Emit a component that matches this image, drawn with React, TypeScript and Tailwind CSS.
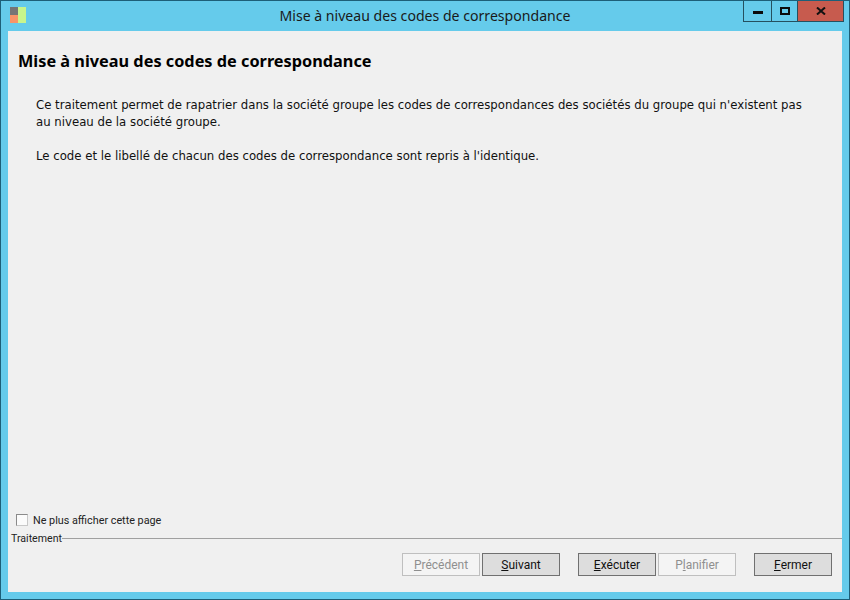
const tahoma = "font-['Tahoma','DejaVu_Sans',sans-serif]"

function WinButton({ label, hotkey, rest, disabled }: { label?: string; hotkey: string; rest: string; disabled?: boolean }) {
  return (
    <button
      className={
        disabled
          ? "w-[78px] h-[23px] border border-[#bfbfbf] bg-[#f4f4f4] text-[#8f8f8f] text-[12px] font-['Roboto',sans-serif] flex items-center justify-center"
          : "w-[78px] h-[23px] border border-[#707070] bg-[#dddddd] text-[#111] text-[12px] font-['Roboto',sans-serif] flex items-center justify-center"
      }
    >
      {label}
      <span className="underline">{hotkey}</span>
      {rest}
    </button>
  )
}

export default function App() {
  return (
    <div className="w-[850px] h-[600px] bg-[#65cbeb] border border-[#1d5f78] flex flex-col font-['Noto_Sans',sans-serif] overflow-hidden">
      <div className="h-[30px] shrink-0 flex items-start">
        <svg className="ml-[9px] mt-[6px]" width="17" height="16" viewBox="0 0 17 16">
          <rect x="0" y="0" width="8" height="8" fill="#757575" />
          <rect x="0" y="8" width="8" height="8" fill="#f79468" />
          <rect x="8" y="0" width="8" height="16" fill="#c8f58c" />
        </svg>
        <div className="flex-1 text-center text-[14.1px] text-[#1a1a1a] leading-[30px] pl-[80px]">Mise à niveau des codes de correspondance</div>
        <div className="flex h-[21px] border border-t-0 border-[#25505f] mr-[5px]">
          <div className="w-[28px] border-r border-[#25505f] flex items-center justify-center">
            <div className="w-[10px] h-[3px] bg-[#0b0b0b] mt-[3px]" />
          </div>
          <div className="w-[26px] border-r border-[#25505f] flex items-center justify-center">
            <div className="w-[10px] h-[8px] border-2 border-[#0b0b0b]" />
          </div>
          <div className="w-[45px] bg-[#c75b4e] flex items-center justify-center">
            <svg width="10" height="8" viewBox="0 0 10 8">
              <path d="M1 0.5 L9 7.5 M9 0.5 L1 7.5" stroke="#111" strokeWidth="2" />
            </svg>
          </div>
        </div>
      </div>
      <div className="flex-1 mx-[7px] mb-[7px] bg-[#f0f0f0] flex flex-col text-[#111]">
        <h1 className="ml-[10px] mt-[19px] text-[16.3px] leading-[22px] font-bold text-black">Mise à niveau des codes de correspondance</h1>
        <div className={`ml-[28px] mt-[25px] w-[780px] text-[11.73px] leading-[17px] ${tahoma}`}>
          <p>Ce traitement permet de rapatrier dans la société groupe les codes de correspondances des sociétés du groupe qui n'existent pas au niveau de la société groupe.</p>
          <p className="mt-[17px]">Le code et le libellé de chacun des codes de correspondance sont repris à l'identique.</p>
        </div>
        <div className="flex-1" />
        <label className="ml-[8px] flex items-center gap-[5px] text-[10.8px] leading-[14px] text-[#222] font-['Roboto',sans-serif]">
          <span className="w-[12px] h-[12px] border border-[#8a8a8a] border-r-[#c8c8c8] border-b-[#c8c8c8] bg-[#fbfbfb]" />
          <span className="mt-[3px]">Ne plus afficher cette page</span>
        </label>
        <div className="mt-[3px] flex items-center ml-[3px] text-[10.6px] leading-[14px] text-[#222] font-['Roboto',sans-serif]">
          <span className="mt-[1px]">Traitement</span>
          <div className="flex-1 h-px bg-[#a0a0a0]" />
        </div>
        <div className="mt-[7px] mb-[16px] flex justify-end mr-[10px]">
          <WinButton hotkey="P" rest="récédent" disabled />
          <div className="w-[2px]" />
          <WinButton hotkey="S" rest="uivant" />
          <div className="w-[18px]" />
          <WinButton hotkey="E" rest="xécuter" />
          <div className="w-[2px]" />
          <WinButton label="P" hotkey="l" rest="anifier" disabled />
          <div className="w-[18px]" />
          <WinButton hotkey="F" rest="ermer" />
        </div>
      </div>
    </div>
  )
}
